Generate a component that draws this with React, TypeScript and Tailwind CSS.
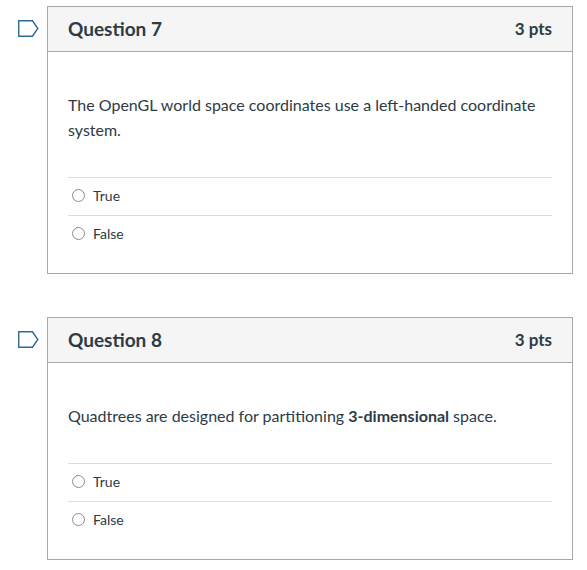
import React from 'react';

interface QuestionProps {
  number: number;
  points: number;
  children: React.ReactNode;
  options: string[];
}

const Bookmark = () => (
  <svg width="21" height="17" viewBox="0 0 21 17" fill="none">
    <path d="M0.75 0.75 H14.5 L19.8 8.5 L14.5 16.25 H0.75 Z" stroke="#2d6b96" strokeWidth="1.4" strokeLinejoin="miter" />
  </svg>
);

const QuestionCard: React.FC<QuestionProps> = ({ number, points, children, options }) => {
  return (
    <div className="flex">
      <div className="w-[47px] shrink-0 pl-[18px] pt-[14px]">
        <Bookmark />
      </div>
      <div className="w-[526px] border border-[#a8a8a8] bg-white">
        <div className="flex h-[45px] items-center justify-between border-b border-[#a8a8a8] bg-[#f5f5f5] pl-[20px] pr-[20px]">
          <h2 className="text-[19px] font-bold text-[#2d3b45]">Question {number}</h2>
          <span className="text-[17px] font-bold text-[#2d3b45]">{points} pts</span>
        </div>
        <div className="px-[20px] pt-[40px] pb-[20px]">
          <div className="text-[16px] leading-[25px] text-[#2d3b45]">{children}</div>
          <div className="mt-[35px]">
            {options.map((opt) => (
              <div key={opt} className="flex h-[38px] items-center border-t border-[#dcdcdc] pl-[4px] pb-[3px]">
                <span className="h-[13px] w-[13px] rounded-full border border-[#8c8c8c] bg-white"></span>
                <span className="ml-[8px] text-[14px] text-[#2d3b45]">{opt}</span>
              </div>
            ))}
          </div>
        </div>
      </div>
    </div>
  );
};

export default function App() {
  return (
    <div className="min-h-[570px] bg-white pt-[6px]" style={{ fontFamily: 'Lato, "Noto Sans", sans-serif' }}>
      <QuestionCard number={7} points={3} options={['True', 'False']}>
        The OpenGL world space coordinates use a left-handed coordinate system.
      </QuestionCard>
      <div className="h-[43px]"></div>
      <QuestionCard number={8} points={3} options={['True', 'False']}>
        Quadtrees are designed for partitioning <strong className="font-bold">3-dimensional</strong> space.
      </QuestionCard>
    </div>
  );
}
